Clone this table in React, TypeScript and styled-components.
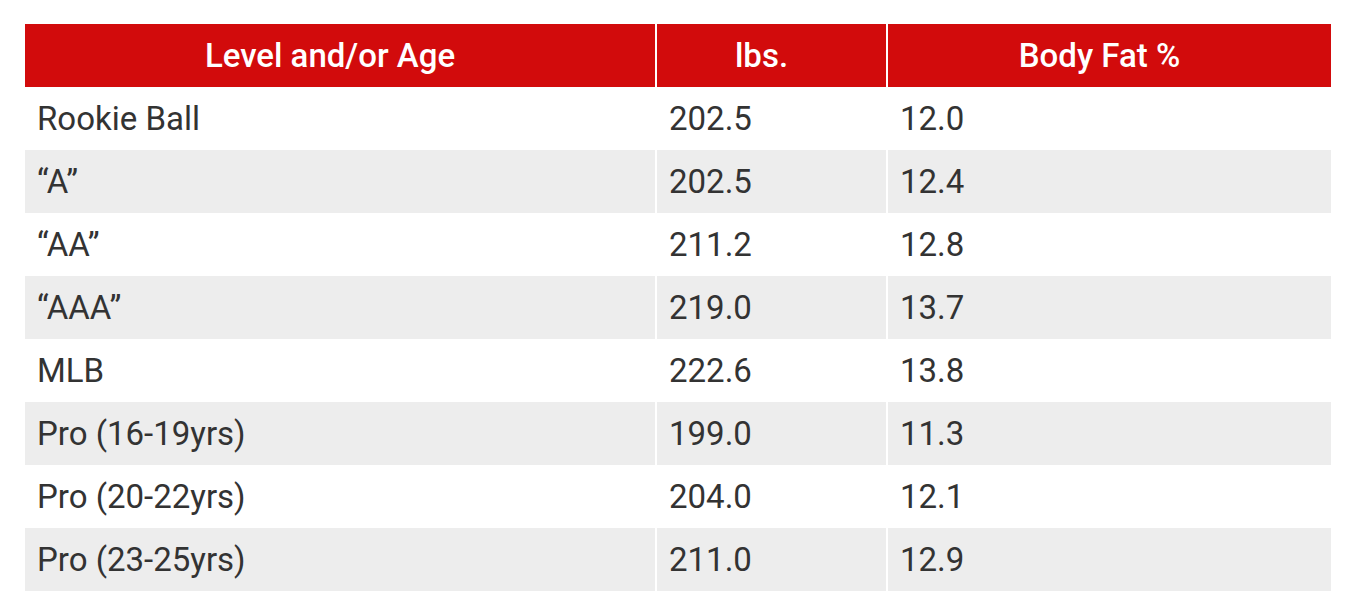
import styled, { createGlobalStyle } from 'styled-components'

const GlobalStyle = createGlobalStyle`
  body {
    margin: 0;
    background: #ffffff;
    font-family: Roboto, "Liberation Sans", Arial, sans-serif;
  }
`

const Wrapper = styled.div`
  padding: 24px 21px 0 25px;
`

const Table = styled.table`
  width: 1306px;
  border-collapse: collapse;
  table-layout: fixed;
`

const HeadCell = styled.th<{ $w: number }>`
  width: ${({ $w }) => $w}px;
  height: 63px;
  padding: 0 30px 0 10px;
  box-sizing: border-box;
  background: #d20b0c;
  color: #ffffff;
  font-size: 33px;
  font-weight: 500;
  text-align: center;
  vertical-align: middle;
  border-right: 2px solid #ffffff;

  &:last-child {
    border-right: none;
  }
`

const Row = styled.tr<{ $shaded: boolean }>`
  background: ${({ $shaded }) => ($shaded ? '#ededed' : '#ffffff')};
`

const Cell = styled.td`
  height: 63px;
  padding: 0 12px;
  box-sizing: border-box;
  color: #333333;
  font-size: 33px;
  font-weight: 400;
  text-align: left;
  vertical-align: middle;
  border-right: 2px solid #ffffff;
  white-space: nowrap;

  &:last-child {
    border-right: none;
  }
`

const rows = [
  ['Rookie Ball', '202.5', '12.0'],
  ['\u201CA\u201D', '202.5', '12.4'],
  ['\u201CAA\u201D', '211.2', '12.8'],
  ['\u201CAAA\u201D', '219.0', '13.7'],
  ['MLB', '222.6', '13.8'],
  ['Pro (16-19yrs)', '199.0', '11.3'],
  ['Pro (20-22yrs)', '204.0', '12.1'],
  ['Pro (23-25yrs)', '211.0', '12.9'],
]

export default function App() {
  return (
    <>
      <GlobalStyle />
      <Wrapper>
        <Table>
          <thead>
            <tr>
              <HeadCell $w={631}>Level and/or Age</HeadCell>
              <HeadCell $w={231}>lbs.</HeadCell>
              <HeadCell $w={444}>Body Fat %</HeadCell>
            </tr>
          </thead>
          <tbody>
            {rows.map((r, i) => (
              <Row key={r[0]} $shaded={i % 2 === 1}>
                <Cell>{r[0]}</Cell>
                <Cell>{r[1]}</Cell>
                <Cell>{r[2]}</Cell>
              </Row>
            ))}
          </tbody>
        </Table>
      </Wrapper>
    </>
  )
}
